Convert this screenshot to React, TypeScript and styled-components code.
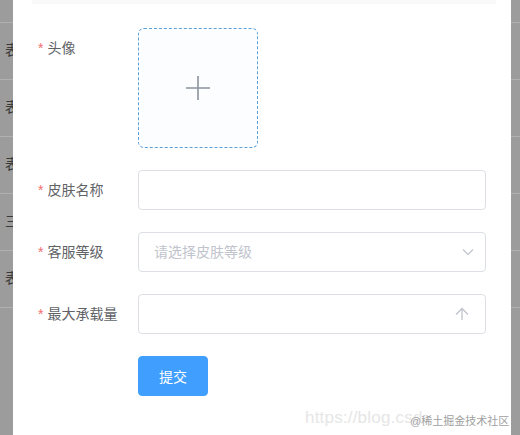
import styled, { createGlobalStyle } from "styled-components";

const GlobalStyle = createGlobalStyle`
  html, body {
    margin: 0;
    height: 100%;
    overflow: hidden;
  }
  body {
    font-family: "Liberation Sans", "Noto Sans CJK SC", sans-serif;
    font-size: 14px;
  }
`;

const backRows = ["表", "表", "表", "三", "表"];

export default function App() {
  return (
    <>
      <GlobalStyle />
      <Backdrop>
        <Side $align="right">
          {backRows.map((t, i) => (
            <BackRow key={i}>{t}</BackRow>
          ))}
        </Side>

        <Dialog>
          <TopBand />
          <Form>
            <FormItem>
              <Label>头像</Label>
              <UploadBox aria-label="上传头像">
                <svg width="24" height="24" viewBox="0 0 24 24">
                  <path d="M12 0v24M0 12h24" stroke="#8c939d" strokeWidth="1.6" fill="none" />
                </svg>
              </UploadBox>
            </FormItem>

            <FormItem>
              <Label>皮肤名称</Label>
              <Field>
                <Input type="text" />
              </Field>
            </FormItem>

            <FormItem>
              <Label>客服等级</Label>
              <Field>
                <Input type="text" readOnly placeholder="请选择皮肤等级" />
                <Suffix>
                  <svg width="12" height="8" viewBox="0 0 12 8">
                    <path d="M1 1.5l5 5 5-5" stroke="#c0c4cc" strokeWidth="1.2" fill="none" />
                  </svg>
                </Suffix>
              </Field>
            </FormItem>

            <FormItem>
              <Label>最大承载量</Label>
              <Field>
                <Input type="text" />
                <Suffix $shift={5}>
                  <svg width="14" height="14" viewBox="0 0 14 14">
                    <path d="M7 13V1.5M1 7.5l6-6 6 6" stroke="#c0c4cc" strokeWidth="1.3" fill="none" />
                  </svg>
                </Suffix>
              </Field>
            </FormItem>

            <FormItem>
              <Spacer />
              <SubmitButton type="button">提交</SubmitButton>
            </FormItem>
          </Form>

          <Watermark>
            <WaterUrl>https://blog.csd</WaterUrl>
            <WaterSign>@稀土掘金技术社区</WaterSign>
          </Watermark>
        </Dialog>

        <Side $align="left">
          {backRows.map((_, i) => (
            <BackRow key={i} />
          ))}
        </Side>
      </Backdrop>
    </>
  );
}

const Backdrop = styled.div`
  display: grid;
  grid-template-columns: 13px 498px 9px;
  height: 435px;
  background: #9c9c9c;
`;

const Side = styled.div<{ $align: "left" | "right" }>`
  overflow: hidden;
  padding-top: 22px;
  text-align: ${(p) => p.$align};
  & > div:first-child {
    border-top: 1px solid #b0b0b0;
  }
`;

const BackRow = styled.div`
  height: 56px;
  line-height: 54px;
  border-bottom: 1px solid #b0b0b0;
  color: #3a3a3a;
  font-size: 14px;
  white-space: nowrap;
  margin-right: -6px;
`;

const Dialog = styled.section`
  position: relative;
  background: #fff;
  overflow: hidden;
`;

const TopBand = styled.div`
  height: 4px;
  margin: 0 15px 0 19px;
  background: #f9f9fa;
`;

const Form = styled.form`
  display: flex;
  flex-direction: column;
  gap: 22px;
  padding: 24px 25px 0 25px;
`;

const FormItem = styled.div`
  display: flex;
  align-items: flex-start;
`;

const Label = styled.label`
  width: 100px;
  flex: none;
  line-height: 40px;
  color: #606266;
  font-size: 14px;
  white-space: nowrap;

  &::before {
    content: "*";
    color: #f56c6c;
    margin-right: 4px;
  }
`;

const Spacer = styled.div`
  width: 100px;
  flex: none;
`;

const UploadBox = styled.div`
  box-sizing: border-box;
  width: 120px;
  height: 120px;
  border: 1px dashed #5a9fd8;
  border-radius: 6px;
  background: #fbfdff;
  display: flex;
  align-items: center;
  justify-content: center;
  cursor: pointer;
`;

const Field = styled.div`
  position: relative;
  flex: 1;
`;

const Input = styled.input`
  box-sizing: border-box;
  width: 100%;
  height: 40px;
  border: 1px solid #dcdfe6;
  border-radius: 4px;
  padding: 0 15px;
  font-family: inherit;
  font-size: 14px;
  color: #606266;
  background: #fff;
  outline: none;

  &::placeholder {
    color: #c0c4cc;
  }
`;

const Suffix = styled.span<{ $shift?: number }>`
  position: absolute;
  top: 0;
  right: ${(p) => 12 + (p.$shift ?? 0)}px;
  height: 40px;
  display: flex;
  align-items: center;
`;

const SubmitButton = styled.button`
  height: 40px;
  padding: 0 20px;
  border: 1px solid #409eff;
  border-radius: 4px;
  background: #409eff;
  color: #fff;
  font-family: inherit;
  font-size: 14px;
  cursor: pointer;
`;

const Watermark = styled.div`
  position: absolute;
  left: 292px;
  top: 408px;
  white-space: nowrap;
`;

const WaterUrl = styled.span`
  font-size: 17px;
  color: #e6e6e6;
  letter-spacing: 0.2px;
`;

const WaterSign = styled.span`
  position: absolute;
  left: 105px;
  top: 4px;
  font-size: 11px;
  color: #a0a0a0;
  text-shadow: 0 0 2px #fff;
`;
